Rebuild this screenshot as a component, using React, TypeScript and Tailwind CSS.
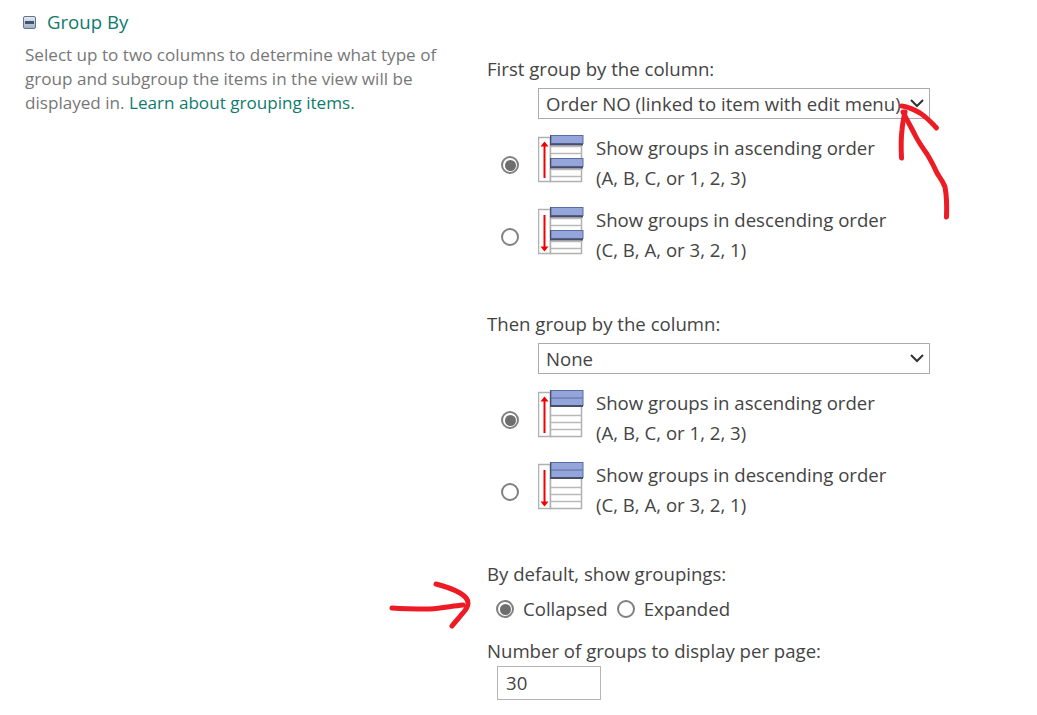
const font = { fontFamily: '"Open Sans", "Noto Sans", sans-serif' };

function SortIcon({ grouped, down }: { grouped?: boolean; down?: boolean }) {
  const rows = grouped ? [25, 32, 39] : [11, 18, 34, 41];
  return (
    <svg width="46" height="48" viewBox="0 0 46 48" className="shrink-0">
      <rect x="0.5" y="2.5" width="12" height="44" fill="#fff" stroke="#b0b0b0" strokeWidth="1.5" />
      <rect x="12.5" y="2.5" width="31" height="44" fill="#fff" stroke="#b0b0b0" strokeWidth="1.5" />
      {rows.map((y) => (
        <line key={y} x1="13" x2="44" y1={y + 0.5} y2={y + 0.5} stroke="#b8b8b8" strokeWidth="1.5" />
      ))}
      {grouped ? (
        <g>
          <rect x="13" y="0.5" width="32" height="15" fill="#94a5d9" stroke="#5a6ca8" />
          <line x1="13" x2="45" y1="8" y2="8" stroke="#5a6ca8" />
          <line x1="12" x2="45" y1="16" y2="16" stroke="#4a4f68" strokeWidth="2" />
          <line x1="12.500" x2="12.500" y1="0" y2="17" stroke="#4a4f68" />
        </g>
      ) : (
        <g>
          <rect x="13" y="0.5" width="32" height="8" fill="#94a5d9" stroke="#5a6ca8" />
          <line x1="12" x2="45" y1="9.5" y2="9.5" stroke="#4a4f68" strokeWidth="2" />
          <line x1="12.500" x2="12.500" y1="0" y2="10" stroke="#4a4f68" />
          <rect x="13" y="23.5" width="32" height="8" fill="#94a5d9" stroke="#5a6ca8" />
          <line x1="12" x2="45" y1="32.5" y2="32.5" stroke="#4a4f68" strokeWidth="2" />
          <line x1="12.500" x2="12.500" y1="23" y2="33" stroke="#4a4f68" />
        </g>
      )}
      <line x1="6.5" x2="6.5" y1="8" y2="43" stroke="#f00000" strokeWidth="2" />
      {down ? (
        <path d="M2.500 39.500h8l-4 5z" fill="#f00000" />
      ) : (
        <path d="M2.500 11.500h8l-4-5z" fill="#f00000" />
      )}
    </svg>
  );
}

function Radio({ checked }: { checked?: boolean }) {
  return (
    <span className="flex h-[18px] w-[18px] shrink-0 items-center justify-center rounded-full border-2 border-[#808080] bg-white">
      {checked && <span className="h-[11px] w-[11px] rounded-full bg-[#6e6e6e]" />}
    </span>
  );
}

function OrderOption({ checked, down, grouped, line1, line2 }: { checked?: boolean; down?: boolean; grouped?: boolean; line1: string; line2: string }) {
  return (
    <div className="flex h-[48px] items-center">
      <div className="ml-[14px] mr-[19px] mt-[12px]">
        <Radio checked={checked} />
      </div>
      <SortIcon grouped={grouped} down={down} />
      <div className="ml-[12px] mt-[7px] whitespace-nowrap leading-[30px] text-[#444]">
        <div>{line1}</div>
        <div>{line2}</div>
      </div>
    </div>
  );
}

function GroupColumn({ label, value, grouped }: { label: string; value: string; grouped?: boolean }) {
  return (
    <div>
      <div className="h-[30px] leading-[30px]">{label}</div>
      <div className="ml-[51px] mt-[4px] flex h-[31px] w-[392px] items-center justify-between border border-[#ababab] pl-[7px] pr-[5px] text-[#444]">
        <span className="whitespace-nowrap">{value}</span>
        <svg width="14" height="9" viewBox="0 0 14 9" fill="none" stroke="#333" strokeWidth="2" className="shrink-0">
          <path d="M1 1l6 6 6-6" />
        </svg>
      </div>
      <div className="mt-[16px] flex flex-col gap-[24px]">
        <OrderOption checked grouped={grouped} line1="Show groups in ascending order" line2="(A, B, C, or 1, 2, 3)" />
        <OrderOption down grouped={grouped} line1="Show groups in descending order" line2="(C, B, A, or 3, 2, 1)" />
      </div>
    </div>
  );
}

export default function App() {
  return (
    <div className="relative h-[715px] w-[1037px] overflow-hidden bg-white text-[18.6px] text-[#444]" style={font}>
      <div className="flex">
        {/* Left: section title and description */}
        <div className="w-[487px] pl-[23px] pt-[8px]">
          <div className="flex h-[28px] items-center">
            <span className="flex h-[13px] w-[13px] items-center justify-center rounded-[2px] border border-[#5f7590] bg-gradient-to-b from-[#e6ebf1] to-[#9fb0c4]">
              <span className="h-[3px] w-[9px] bg-[#3f5570]" />
            </span>
            <span className="ml-[11px] text-[#0f7b6c]">Group By</span>
          </div>
          <p className="ml-[2px] mt-[7px] w-[450px] whitespace-nowrap text-[17.1px] leading-[24px] text-[#777]">
            Select up to two columns to determine what type of
            <br />
            group and subgroup the items in the view will be
            <br />
            displayed in. <span className="text-[#0f7b6c]">Learn about grouping items.</span>
          </p>
        </div>

        {/* Right: form */}
        <div className="pt-[54px]">
          <GroupColumn label="First group by the column:" value="Order NO (linked to item with edit menu)" />
          <div className="mt-[54px]">
            <GroupColumn grouped label="Then group by the column:" value="None" />
          </div>
          <div className="mt-[49px] h-[30px] leading-[30px]">By default, show groupings:</div>
          <div className="mt-[5px] flex h-[30px] items-center pl-[9px]">
            <Radio checked />
            <span className="ml-[9px]">Collapsed</span>
            <span className="ml-[9px]">
              <Radio />
            </span>
            <span className="ml-[9px]">Expanded</span>
          </div>
          <div className="mt-[12px] h-[30px] leading-[30px]">Number of groups to display per page:</div>
          <div className="ml-[10px] flex h-[34px] w-[104px] items-center border border-[#b5b5b5] pl-[8px]">30</div>
        </div>
      </div>

      {/* Red hand-drawn annotations */}
      <svg className="pointer-events-none absolute left-0 top-0" width="1037" height="715" fill="none" stroke="#ed1c24" strokeWidth="5" strokeLinecap="round" strokeLinejoin="round">
        <path d="M946.500 217C947 205 946.500 195 945 187C942 179 938 176 936 171C933 164 930 159 927 154C922 147 918 141 915 135C911 127 907 120 903 112" />
        <path d="M901.500 158C901 148 901 138 902 130C902.500 123 904 117 905 112" />
        <path d="M902 106C909 107 915 110 920 113C926 117 932 123 936.500 128" />
        <path d="M392 608C405 609 418 609 430 609C442 608 453 606 463 605" />
        <path d="M436 584C444 586 453 589 460 593C465 596 468 599 468 603C468 607 466 610 462 614C459 618 455 622 452 626" />
      </svg>
    </div>
  );
}
